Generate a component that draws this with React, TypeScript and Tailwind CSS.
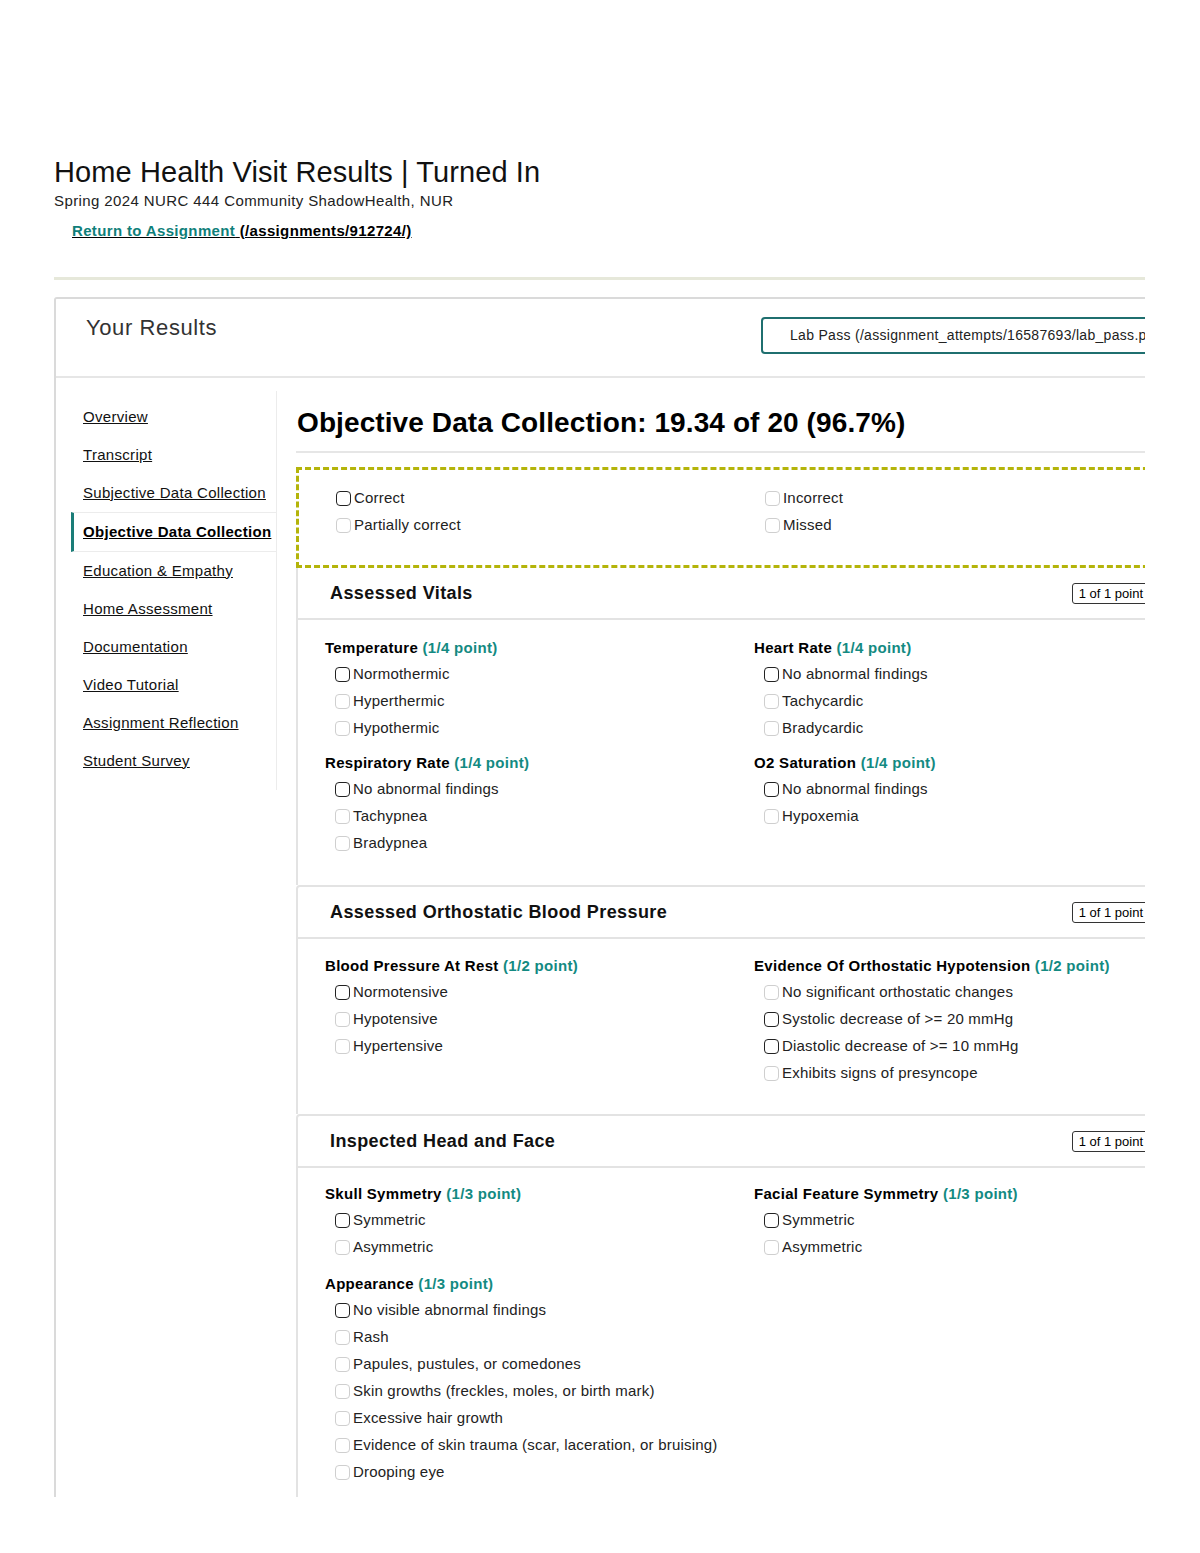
import React from "react";

type Option = { label: string; picked?: boolean };
type Group = { title: string; points: string; options: Option[] };
type Section = { title: string; rows: (Group | null)[][]; bodyClass: string; first?: boolean };

const navItems = [
    "Overview",
    "Transcript",
    "Subjective Data Collection",
    "Objective Data Collection",
    "Education & Empathy",
    "Home Assessment",
    "Documentation",
    "Video Tutorial",
    "Assignment Reflection",
    "Student Survey",
];

const sections: Section[] = [
    {
        title: "Assessed Vitals",
        first: true,
        bodyClass: "pt-[18px] pb-[28px] gap-[11px]",
        rows: [
            [
                { title: "Temperature", points: "(1/4 point)", options: [{ label: "Normothermic", picked: true }, { label: "Hyperthermic" }, { label: "Hypothermic" }] },
                { title: "Heart Rate", points: "(1/4 point)", options: [{ label: "No abnormal findings", picked: true }, { label: "Tachycardic" }, { label: "Bradycardic" }] },
            ],
            [
                { title: "Respiratory Rate", points: "(1/4 point)", options: [{ label: "No abnormal findings", picked: true }, { label: "Tachypnea" }, { label: "Bradypnea" }] },
                { title: "O2 Saturation", points: "(1/4 point)", options: [{ label: "No abnormal findings", picked: true }, { label: "Hypoxemia" }] },
            ],
        ],
    },
    {
        title: "Assessed Orthostatic Blood Pressure",
        bodyClass: "pt-[17px] pb-[27px] gap-[11px]",
        rows: [
            [
                { title: "Blood Pressure At Rest", points: "(1/2 point)", options: [{ label: "Normotensive", picked: true }, { label: "Hypotensive" }, { label: "Hypertensive" }] },
                {
                    title: "Evidence Of Orthostatic Hypotension",
                    points: "(1/2 point)",
                    options: [
                        { label: "No significant orthostatic changes" },
                        { label: "Systolic decrease of >= 20 mmHg", picked: true },
                        { label: "Diastolic decrease of >= 10 mmHg", picked: true },
                        { label: "Exhibits signs of presyncope" },
                    ],
                },
            ],
        ],
    },
    {
        title: "Inspected Head and Face",
        bodyClass: "pt-[16px] pb-[30px] gap-[13px]",
        rows: [
            [
                { title: "Skull Symmetry", points: "(1/3 point)", options: [{ label: "Symmetric", picked: true }, { label: "Asymmetric" }] },
                { title: "Facial Feature Symmetry", points: "(1/3 point)", options: [{ label: "Symmetric", picked: true }, { label: "Asymmetric" }] },
            ],
            [
                {
                    title: "Appearance",
                    points: "(1/3 point)",
                    options: [
                        { label: "No visible abnormal findings", picked: true },
                        { label: "Rash" },
                        { label: "Papules, pustules, or comedones" },
                        { label: "Skin growths (freckles, moles, or birth mark)" },
                        { label: "Excessive hair growth" },
                        { label: "Evidence of skin trauma (scar, laceration, or bruising)" },
                        { label: "Drooping eye" },
                    ],
                },
                null,
            ],
        ],
    },
];

const Box = ({ on }: { on?: boolean }) => (
    <span
        className={
            on
                ? "inline-block w-[15px] h-[15px] shrink-0 rounded-[4px] border-[1.5px] border-[#222]"
                : "inline-block w-[15px] h-[15px] shrink-0 rounded-[4px] border border-[#cfcfcf]"
        }
    />
);

const OptionRow = ({ option }: { option: Option }) => (
    <div className="flex items-center h-[27px] ml-[10px] gap-[3px] text-[15px] text-[#222] tracking-[0.2px]">
        <Box on={option.picked} />
        <span>{option.label}</span>
    </div>
);

const GroupBlock = ({ group }: { group: Group }) => (
    <div>
        <div className="h-[20px] leading-[20px] mb-[3px] text-[15px] font-bold tracking-[0.3px] text-black whitespace-nowrap">
            {group.title} <span className="text-[#138a82]">{group.points}</span>
        </div>
        {group.options.map((option, index) => (
            <OptionRow key={index} option={option} />
        ))}
    </div>
);

const SectionCard = ({ section }: { section: Section }) => (
    <div className={`border-l-2 border-r-2 border-[#e3e3e3] ${section.first ? "" : "border-t-2 rounded-tl-[4px]"}`}>
        <div className="flex items-center justify-between h-[52px] pl-[32px] pr-[60px] border-b-2 border-[#e3e3e3]">
            <span className="text-[18px] font-bold tracking-[0.4px] text-[#111]">{section.title}</span>
            <span className="border border-[#333] rounded-[3px] px-[6px] h-[21px] leading-[19px] text-[13px] text-black">1 of 1 point</span>
        </div>
        <div className={`pl-[27px] ${section.bodyClass} flex flex-col`}>
            {section.rows.map((row, rowIndex) => (
                <div key={rowIndex} className="grid grid-cols-[429px_429px]">
                    {row.map((group, groupIndex) => (group ? <GroupBlock key={groupIndex} group={group} /> : <div key={groupIndex} />))}
                </div>
            ))}
        </div>
    </div>
);

export default function App() {
    return (
        <div className="w-[1200px] h-[1553px] bg-white text-black" style={{ fontFamily: '"Liberation Sans", Arial, sans-serif' }}>
            <div className="ml-[54px] w-[1091px] h-[1497px] overflow-hidden pt-[156px]">
                <h1 className="text-[29px] leading-[33px] tracking-[0.1px] text-[#111]">Home Health Visit Results | Turned In</h1>
                <div className="mt-[3px] text-[15px] leading-[18px] tracking-[0.4px] text-[#222]">Spring 2024 NURC 444 Community ShadowHealth, NUR</div>
                <div className="mt-[12px] ml-[18px] text-[15px] leading-[18px] font-bold tracking-[0.35px] underline">
                    <span className="text-[#0f7f7a]">Return to Assignment</span> <span className="text-black">(/assignments/912724/)</span>
                </div>
                <div className="mt-[37px] h-[3px] bg-[#e6e8da]" />

                <div className="mt-[17px] w-[1186px] border-l-2 border-t-2 border-r-2 border-[#dadada] rounded-tl-[3px]">
                    <div className="flex items-start justify-between h-[79px] pt-[15px] pl-[30px] pr-[47px] border-b-2 border-[#e6e6e6]">
                        <span className="text-[22px] leading-[28px] tracking-[0.6px] text-[#333]">Your Results</span>
                        <span className="mt-[3px] w-[430px] h-[37px] flex items-center pl-[27px] border-2 border-[#1f6f6f] rounded-[4px] text-[14px] tracking-[0.3px] text-[#222] whitespace-nowrap overflow-hidden">
                            Lab Pass (/assignment_attempts/16587693/lab_pass.pdf)
                        </span>
                    </div>

                    <div className="flex">
                        <div className="w-[221px] shrink-0 self-start mt-[13px] pt-[7px] pb-[10px] border-r border-[#ececec]">
                            {navItems.map((item) => {
                                const active = item === "Objective Data Collection";
                                return (
                                    <div
                                        key={item}
                                        className={
                                            active
                                                ? "ml-[15px] h-[40px] flex items-center pl-[9px] border-l-[3px] border-l-[#1a7d78] border-y border-y-[#ececec] text-[15px] font-bold underline tracking-[0.3px] text-black whitespace-nowrap"
                                                : "ml-[15px] h-[38px] flex items-center pl-[9px] border-l-[3px] border-l-transparent text-[15px] underline tracking-[0.3px] text-[#111] whitespace-nowrap"
                                        }
                                    >
                                        {item}
                                    </div>
                                );
                            })}
                        </div>

                        <div className="flex-1 pl-[19px] pr-[26px]">
                            <div className="pt-[29px] pb-[12px] border-b-2 border-[#e6e6e6]">
                                <h2 className="ml-[1px] text-[28px] leading-[32px] font-bold tracking-[0.1px] text-black">Objective Data Collection: 19.34 of 20 (96.7%)</h2>
                            </div>

                            <div className="mt-[14px] border-[3px] border-dashed border-[#b4b40a] pt-[15px] pb-[26px] pl-[37px]">
                                <div className="grid grid-cols-[429px_429px]">
                                    <div>
                                        <div className="flex items-center h-[27px] gap-[3px] text-[15px] tracking-[0.2px] text-[#222]">
                                            <Box on />
                                            <span>Correct</span>
                                        </div>
                                        <div className="flex items-center h-[27px] gap-[3px] text-[15px] tracking-[0.2px] text-[#222]">
                                            <Box />
                                            <span>Partially correct</span>
                                        </div>
                                    </div>
                                    <div>
                                        <div className="flex items-center h-[27px] gap-[3px] text-[15px] tracking-[0.2px] text-[#222]">
                                            <Box />
                                            <span>Incorrect</span>
                                        </div>
                                        <div className="flex items-center h-[27px] gap-[3px] text-[15px] tracking-[0.2px] text-[#222]">
                                            <Box />
                                            <span>Missed</span>
                                        </div>
                                    </div>
                                </div>
                            </div>

                            {sections.map((section) => (
                                <SectionCard key={section.title} section={section} />
                            ))}
                        </div>
                    </div>
                </div>
            </div>
        </div>
    );
}
